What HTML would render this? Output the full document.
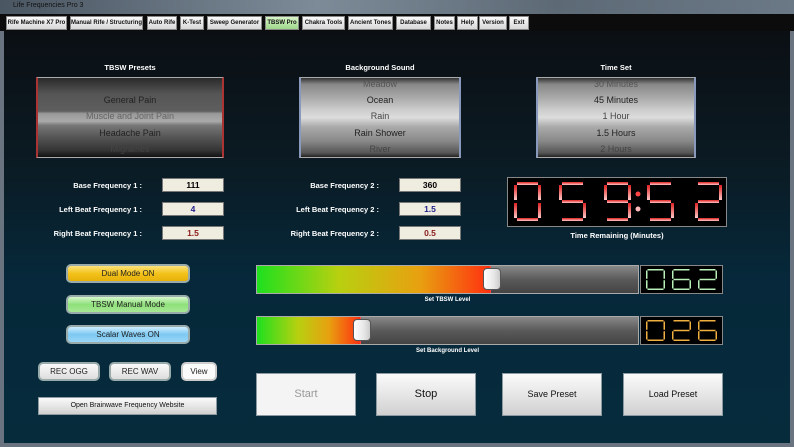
<!DOCTYPE html>
<html><head><meta charset="utf-8"><style>
*{margin:0;padding:0;box-sizing:border-box}
body{width:794px;height:447px;overflow:hidden;background:#6a7480;font-family:"Liberation Sans",sans-serif;position:relative}
.abs{position:absolute}
#title{left:0;top:0;width:794px;height:14px;background:linear-gradient(90deg,#4a5662,#7d8b98 40%,#5d6a76 70%,#6b7886);}
#title span{position:absolute;left:13px;top:2px;font-size:7px;color:#111}
#tabbar{left:0;top:14px;width:794px;height:17px;background:#0c0c0c}
.tab{position:absolute;top:2px;height:14px;background:linear-gradient(#fafafa,#d8d8d8);border:1px solid #888;font-size:6px;line-height:12px;text-align:center;color:#111;font-weight:bold}
#main{left:4px;top:31px;width:786px;height:412px;background:linear-gradient(#0b0f14 0%,#0b1a22 30%,#06283a 60%,#062c3c 100%)}
.lbl{position:absolute;color:#fff;font-size:7.5px;font-weight:bold;text-align:center}
.rlbl{position:absolute;color:#fff;font-size:7.5px;font-weight:bold;text-align:right;width:130px}
.wheel{position:absolute;border:1px solid #aaa;overflow:hidden}
.wheel div{position:absolute;left:0;width:100%;text-align:center;font-size:9px;color:#222}
.inp{position:absolute;width:62px;height:14px;background:#efece0;border:1px solid #777;font-size:8.5px;font-weight:bold;text-align:center;line-height:12px}
.pill{position:absolute;width:124px;height:19px;border-radius:5px;border:2px solid #9aa;font-size:8px;text-align:center;line-height:15px;color:#222}
.btn{position:absolute;background:linear-gradient(#fafafa,#e6e6e6 50%,#d0d0d0);border:1px solid #8a9aa0;text-align:center;color:#111}
.track{position:absolute;height:29px;border:1px solid #aaa;background:linear-gradient(#888,#5a5a5a 50%,#444)}
.thumb{position:absolute;width:18px;height:22px;top:2px;border-radius:4px;background:linear-gradient(90deg,#fff,#e8e8e8 60%,#ccc);border:1px solid #555}
.disp{position:absolute;background:#000;border:1px solid #888}
.lw{background:linear-gradient(#333,#888 8%,#aaa 25%,#ccc 40%,#ddd 50%,#aaa 62%,#888 80%,#555 95%,#222)!important;border-left:2px solid #89b!important;border-right:2px solid #89b!important}
</style></head><body>
<div id="title" class="abs"><span>Life Frequencies Pro 3</span></div>
<div id="tabbar" class="abs">
<div class="tab" style="left:6px;width:61px">Rife Machine X7 Pro</div>
<div class="tab" style="left:70px;width:73px">Manual Rife / Structuring</div>
<div class="tab" style="left:147px;width:30px">Auto Rife</div>
<div class="tab" style="left:180px;width:24px">K-Test</div>
<div class="tab" style="left:207px;width:55px">Sweep Generator</div>
<div class="tab" style="left:265px;width:34px;background:linear-gradient(#d8f5c8,#9ed68a)">TBSW Pro</div>
<div class="tab" style="left:302px;width:43px">Chakra Tools</div>
<div class="tab" style="left:348px;width:45px">Ancient Tones</div>
<div class="tab" style="left:396px;width:35px">Database</div>
<div class="tab" style="left:434px;width:21px">Notes</div>
<div class="tab" style="left:457px;width:21px">Help</div>
<div class="tab" style="left:479px;width:28px">Version</div>
<div class="tab" style="left:509px;width:20px">Exit</div>
</div>
<div id="main" class="abs"></div>

<div class="lbl" style="left:36px;top:63px;width:188px">TBSW Presets</div>
<div class="lbl" style="left:299px;top:63px;width:162px">Background Sound</div>
<div class="lbl" style="left:536px;top:63px;width:160px">Time Set</div>

<div class="wheel" style="left:36px;top:77px;width:188px;height:81px;background:linear-gradient(#2a2a2a,#555 20%,#5e5e5e 42%,#999 45%,#aaa 55%,#777 60%,#555 75%,#333 92%,#111);border-left:2px solid #a33;border-right:2px solid #a33">
<div style="top:17px">General Pain</div>
<div style="top:33px;color:#666">Muscle and Joint Pain</div>
<div style="top:50px">Headache Pain</div>
<div style="top:66px;color:#444">Migraines</div>
</div>
<div class="wheel lw" style="left:299px;top:77px;width:162px;height:81px">
<div style="top:1px;color:#555">Meadow</div>
<div style="top:17px">Ocean</div>
<div style="top:33px;color:#444">Rain</div>
<div style="top:50px">Rain Shower</div>
<div style="top:66px;color:#444">River</div>
</div>
<div class="wheel lw" style="left:536px;top:77px;width:160px;height:81px">
<div style="top:1px;color:#555">30 Minutes</div>
<div style="top:17px">45 Minutes</div>
<div style="top:33px;color:#444">1 Hour</div>
<div style="top:50px">1.5 Hours</div>
<div style="top:66px;color:#444">2 Hours</div>
</div>

<div class="rlbl" style="left:12px;top:181px">Base Frequency 1 :</div>
<div class="rlbl" style="left:12px;top:205px">Left Beat Frequency 1 :</div>
<div class="rlbl" style="left:12px;top:229px">Right Beat Frequency 1 :</div>
<div class="inp" style="left:162px;top:178px">111</div>
<div class="inp" style="left:162px;top:202px;color:#22228a">4</div>
<div class="inp" style="left:162px;top:226px;color:#8a1a1a">1.5</div>
<div class="rlbl" style="left:249px;top:181px">Base Frequency 2 :</div>
<div class="rlbl" style="left:249px;top:205px">Left Beat Frequency 2 :</div>
<div class="rlbl" style="left:249px;top:229px">Right Beat Frequency 2 :</div>
<div class="inp" style="left:399px;top:178px">360</div>
<div class="inp" style="left:399px;top:202px;color:#22228a">1.5</div>
<div class="inp" style="left:399px;top:226px;color:#8a1a1a">0.5</div>

<div class="disp" style="left:507px;top:177px;width:220px;height:50px"><svg id="clk" width="218" height="48"></svg></div>
<div class="lbl" style="left:507px;top:231px;width:220px">Time Remaining (Minutes)</div>

<div class="pill" style="left:66px;top:264px;background:linear-gradient(#fbe27a,#f3c21a 50%,#e6b10a)">Dual Mode ON</div>
<div class="pill" style="left:66px;top:295px;background:linear-gradient(#d6f7cc,#8ee07a 50%,#a6e894)">TBSW Manual Mode</div>
<div class="pill" style="left:66px;top:325px;background:linear-gradient(#cfeeff,#7cc8f2 50%,#9ad6f6)">Scalar Waves ON</div>
<div class="pill" style="left:38px;top:362px;width:62px;background:linear-gradient(#fafafa,#ddd);font-size:8px">REC OGG</div>
<div class="pill" style="left:109px;top:362px;width:62px;background:linear-gradient(#fafafa,#ddd);font-size:8px">REC WAV</div>
<div class="pill" style="left:181px;top:362px;width:36px;background:#fafafa;border-color:#ccc;font-size:8px">View</div>
<div class="btn" style="left:38px;top:397px;width:179px;height:18px;font-size:7px;line-height:16px">Open Brainwave Frequency Website</div>

<div class="track" style="left:256px;top:265px;width:383px"><div style="position:absolute;left:0;top:0;height:27px;width:234px;background:linear-gradient(90deg,#1ee01e,#b8d010 35%,#e8a010 70%,#ff3010);border-right:1px solid #f44"></div><div class="thumb" style="left:226px"></div></div>
<div class="disp" style="left:640px;top:265px;width:83px;height:29px"><svg id="l1" width="81" height="27"></svg></div>
<div class="lbl" style="left:256px;top:297px;width:383px;font-size:6px">Set TBSW Level</div>
<div class="track" style="left:256px;top:316px;width:383px"><div style="position:absolute;left:0;top:0;height:27px;width:104px;background:linear-gradient(90deg,#1ee01e,#b8d010 40%,#e8a010 70%,#ff3010);border-right:1px solid #f44"></div><div class="thumb" style="left:96px"></div></div>
<div class="disp" style="left:640px;top:316px;width:83px;height:29px"><svg id="l2" width="81" height="27"></svg></div>
<div class="lbl" style="left:256px;top:348px;width:383px;font-size:6px">Set Background Level</div>

<div class="btn" style="left:256px;top:373px;width:100px;height:43px;font-size:11px;line-height:41px;color:#999;background:#f4f4f4">Start</div>
<div class="btn" style="left:376px;top:373px;width:100px;height:43px;font-size:11px;line-height:41px">Stop</div>
<div class="btn" style="left:502px;top:373px;width:100px;height:43px;font-size:9px;line-height:41px">Save Preset</div>
<div class="btn" style="left:623px;top:373px;width:100px;height:43px;font-size:9px;line-height:41px">Load Preset</div>

<script>
var S={0:"abcdef",1:"bc",2:"abged",5:"afgcd",6:"afgedc",9:"abcdfg"};
function seg(svg,ch,x,y,w,h,t,col){
 var s=S[ch],o="",m=h/2;
 var r={a:[x+t,y,w-2*t,t],d:[x+t,y+h-t,w-2*t,t],g:[x+t,y+m-t/2,w-2*t,t],
 f:[x,y+t,t,m-t*1.5],b:[x+w-t,y+t,t,m-t*1.5],e:[x,y+m+t/2,t,m-t*1.5],c:[x+w-t,y+m+t/2,t,m-t*1.5]};
 for(var i=0;i<s.length;i++){var q=r[s[i]];o+='<rect x="'+q[0]+'" y="'+q[1]+'" width="'+q[2]+'" height="'+q[3]+'" fill="'+col+'"/>';}
 svg.innerHTML+=o;}
var c=document.getElementById("clk"),g='url(#rg)';
c.innerHTML='<defs><linearGradient id="rg" x1="0" y1="0" x2="0" y2="1"><stop offset="0" stop-color="#e02020"/><stop offset="1" stop-color="#ffc8c8"/></linearGradient></defs>';
var xs=[6,51,96,139,187];"05952".split("").forEach(function(d,i){seg(c,d,xs[i],4,27,39,3,g)});
c.innerHTML+='<circle cx="130" cy="16" r="2.5" fill="#f44"/><circle cx="130" cy="31" r="2.5" fill="#fbb"/>';
var a=document.getElementById("l1");[0,6,2].forEach(function(d,i){seg(a,d,5+i*26,3,19,21,1.5,"#b8f0b8")});
var b=document.getElementById("l2");[0,2,6].forEach(function(d,i){seg(b,d,5+i*26,3,19,21,1.5,"#f0b040")});
</script>
</body></html>
